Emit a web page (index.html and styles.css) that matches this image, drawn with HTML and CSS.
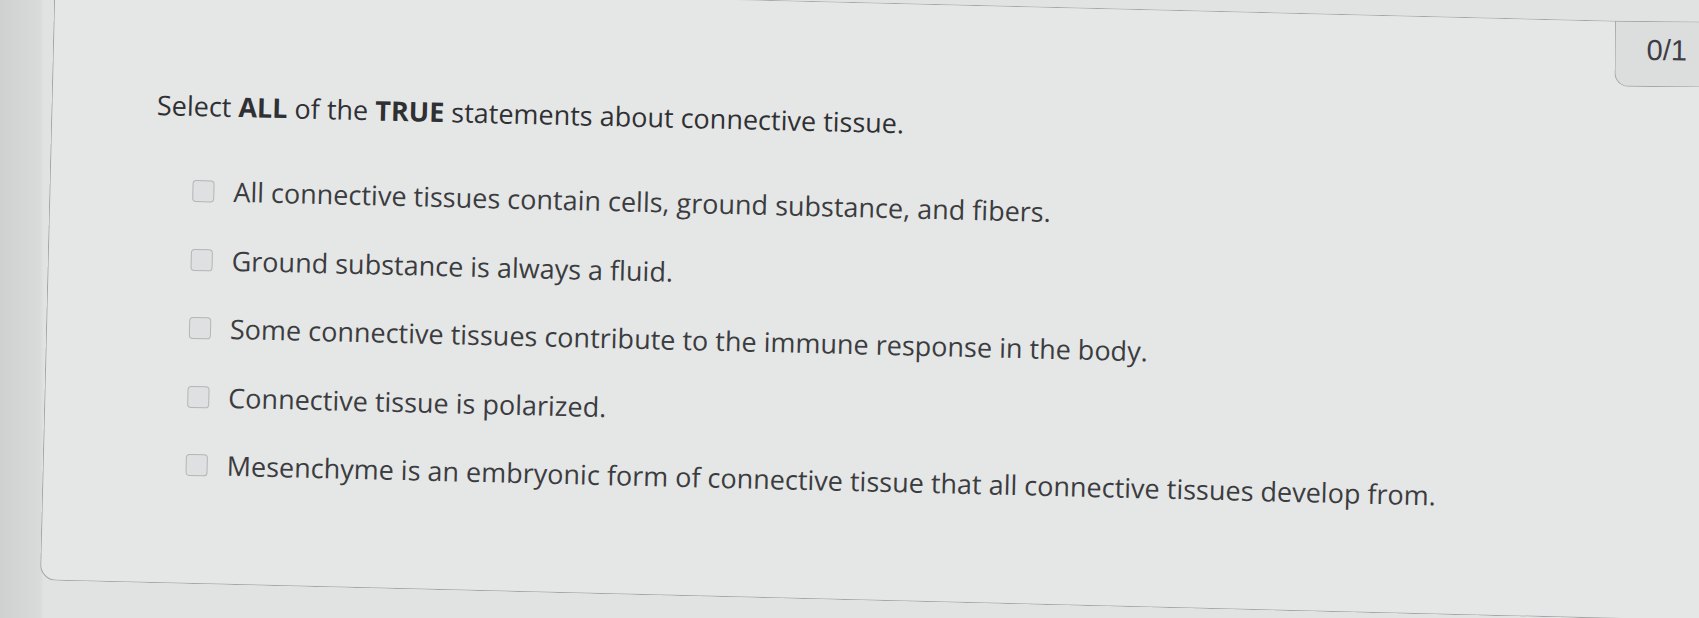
FILE: index.html
```html
<!DOCTYPE html>
<html lang="en">
<head>
<meta charset="utf-8">
<title>Question</title>
<link rel="stylesheet" href="styles.css">
</head>
<body>
<div class="page">
  <main class="card">
    <div class="score">0/1</div>
    <p class="question">Select <b>ALL</b> of the <b>TRUE</b> statements about connective tissue.</p>
    <ul class="options">
      <li class="option"><span class="box"></span><span class="label">All connective tissues contain cells, ground substance, and fibers.</span></li>
      <li class="option"><span class="box"></span><span class="label">Ground substance is always a fluid.</span></li>
      <li class="option"><span class="box"></span><span class="label">Some connective tissues contribute to the immune response in the body.</span></li>
      <li class="option"><span class="box"></span><span class="label">Connective tissue is polarized.</span></li>
      <li class="option"><span class="box"></span><span class="label">Mesenchyme is an embryonic form of connective tissue that all connective tissues develop from.</span></li>
    </ul>
  </main>
</div>
</body>
</html>
```

FILE: styles.css
```css
html, body {
  margin: 0;
  padding: 0;
  height: 100%;
  overflow: hidden;
}
body {
  background: linear-gradient(to right, #cfd0d0 0, #d9dada 40px, #e1e2e2 44px, #e1e2e2 100%);
  font-family: "Open Sans", "DejaVu Sans", sans-serif;
  color: #3a3b3f;
}
.page {
  display: flow-root;
  height: 618px;
}
.card {
  position: relative;
  height: 598px;
  margin: -14px -40px 0 46px;
  background: #e5e6e6;
  border: 1.5px solid #a3a5a7;
  border-right: none;
  border-radius: 0 0 0 16px;
  padding: 101px 0 0 104.5px;
  box-sizing: border-box;
  transform: rotate(1.4deg);
  transform-origin: 147px 344px;
}
.score {
  position: absolute;
  top: -1.5px;
  right: 0;
  width: 131px;
  height: 66px;
  box-sizing: border-box;
  padding: 14px 0 0 31px;
  background: #dcdede;
  border: 1.5px solid #a5a7a9;
  border-right: none;
  border-radius: 0 0 0 14px;
  font-family: "Liberation Sans", Arial, sans-serif;
  font-size: 29px;
  line-height: 29px;
  color: #3c3d45;
  transform: rotate(-0.9deg);
  transform-origin: 0 100%;
}
.question {
  margin: 0;
  font-size: 27px;
  line-height: 36px;
  color: #2f3033;
}
.question b {
  font-weight: 700;
}
.options {
  list-style: none;
  margin: 49px 0 0 37.5px;
  padding: 0;
  display: flex;
  flex-direction: column;
  gap: 32.5px;
}
.option {
  display: flex;
  align-items: center;
  height: 36px;
}
.box {
  width: 22px;
  height: 22px;
  box-sizing: border-box;
  border: 1.5px solid #b4b5b6;
  border-radius: 4px;
  background: #dfe0e1;
  flex: none;
  margin-right: 19px;
}
.label {
  font-size: 27px;
  line-height: 36px;
  color: #3b3c40;
  white-space: nowrap;
}
```
